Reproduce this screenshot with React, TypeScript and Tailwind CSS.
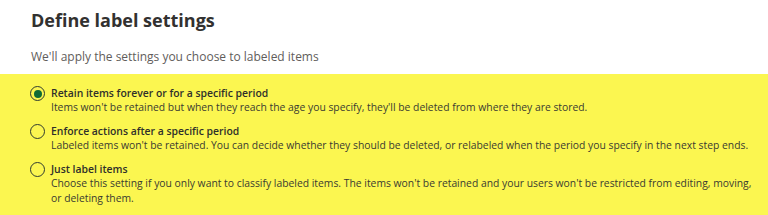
import React from 'react';

type Option = {
    title: string;
    lines: string[];
    checked?: boolean;
};

const options: Option[] = [
    {
        title: 'Retain items forever or for a specific period',
        lines: ["Items won't be retained but when they reach the age you specify, they'll be deleted from where they are stored."],
        checked: true,
    },
    {
        title: 'Enforce actions after a specific period',
        lines: [
            "Labeled items won't be retained. You can decide whether they should be deleted, or relabeled when the period you specify in the next step ends.",
        ],
    },
    {
        title: 'Just label items',
        lines: [
            "Choose this setting if you only want to classify labeled items. The items won't be retained and your users won't be restricted from editing, moving,",
            'or deleting them.',
        ],
    },
];

function Radio({ checked }: { checked?: boolean }) {
    return (
        <span className="flex h-[15px] w-[15px] shrink-0 items-center justify-center rounded-full border border-[#2f3b2f]">
            {checked && <span className="h-[8px] w-[8px] rounded-full bg-[#0f6b35]" />}
        </span>
    );
}

export default function App() {
    return (
        <div
            className="flex h-[215px] w-[768px] flex-col overflow-hidden bg-white"
            style={{ fontFamily: '"Open Sans", "Noto Sans", Arial, sans-serif' }}
        >
            {/* Header */}
            <div className="px-[31px] pt-[8px]">
                <h1 className="text-[18px] font-bold leading-[24px] text-[#323130]">Define label settings</h1>
                <p className="mt-[17px] text-[12px] leading-[16px] text-[#5f5d5b]">
                    We'll apply the settings you choose to labeled items
                </p>
            </div>

            {/* Options */}
            <div className="mt-[9px] flex flex-1 flex-col gap-[9px] bg-[#fbf650] px-[30px] pt-[12px]">
                {options.map((opt) => (
                    <label key={opt.title} className="flex gap-[6px]">
                        <Radio checked={opt.checked} />
                        <div className="flex flex-col">
                            <span className="text-[10.4px] font-semibold leading-[14px] text-[#2f2f2a]">{opt.title}</span>
                            {opt.lines.map((line) => (
                                <span key={line} className="whitespace-nowrap text-[10.35px] leading-[15px] text-[#3a3a30]">
                                    {line}
                                </span>
                            ))}
                        </div>
                    </label>
                ))}
            </div>
        </div>
    );
}
